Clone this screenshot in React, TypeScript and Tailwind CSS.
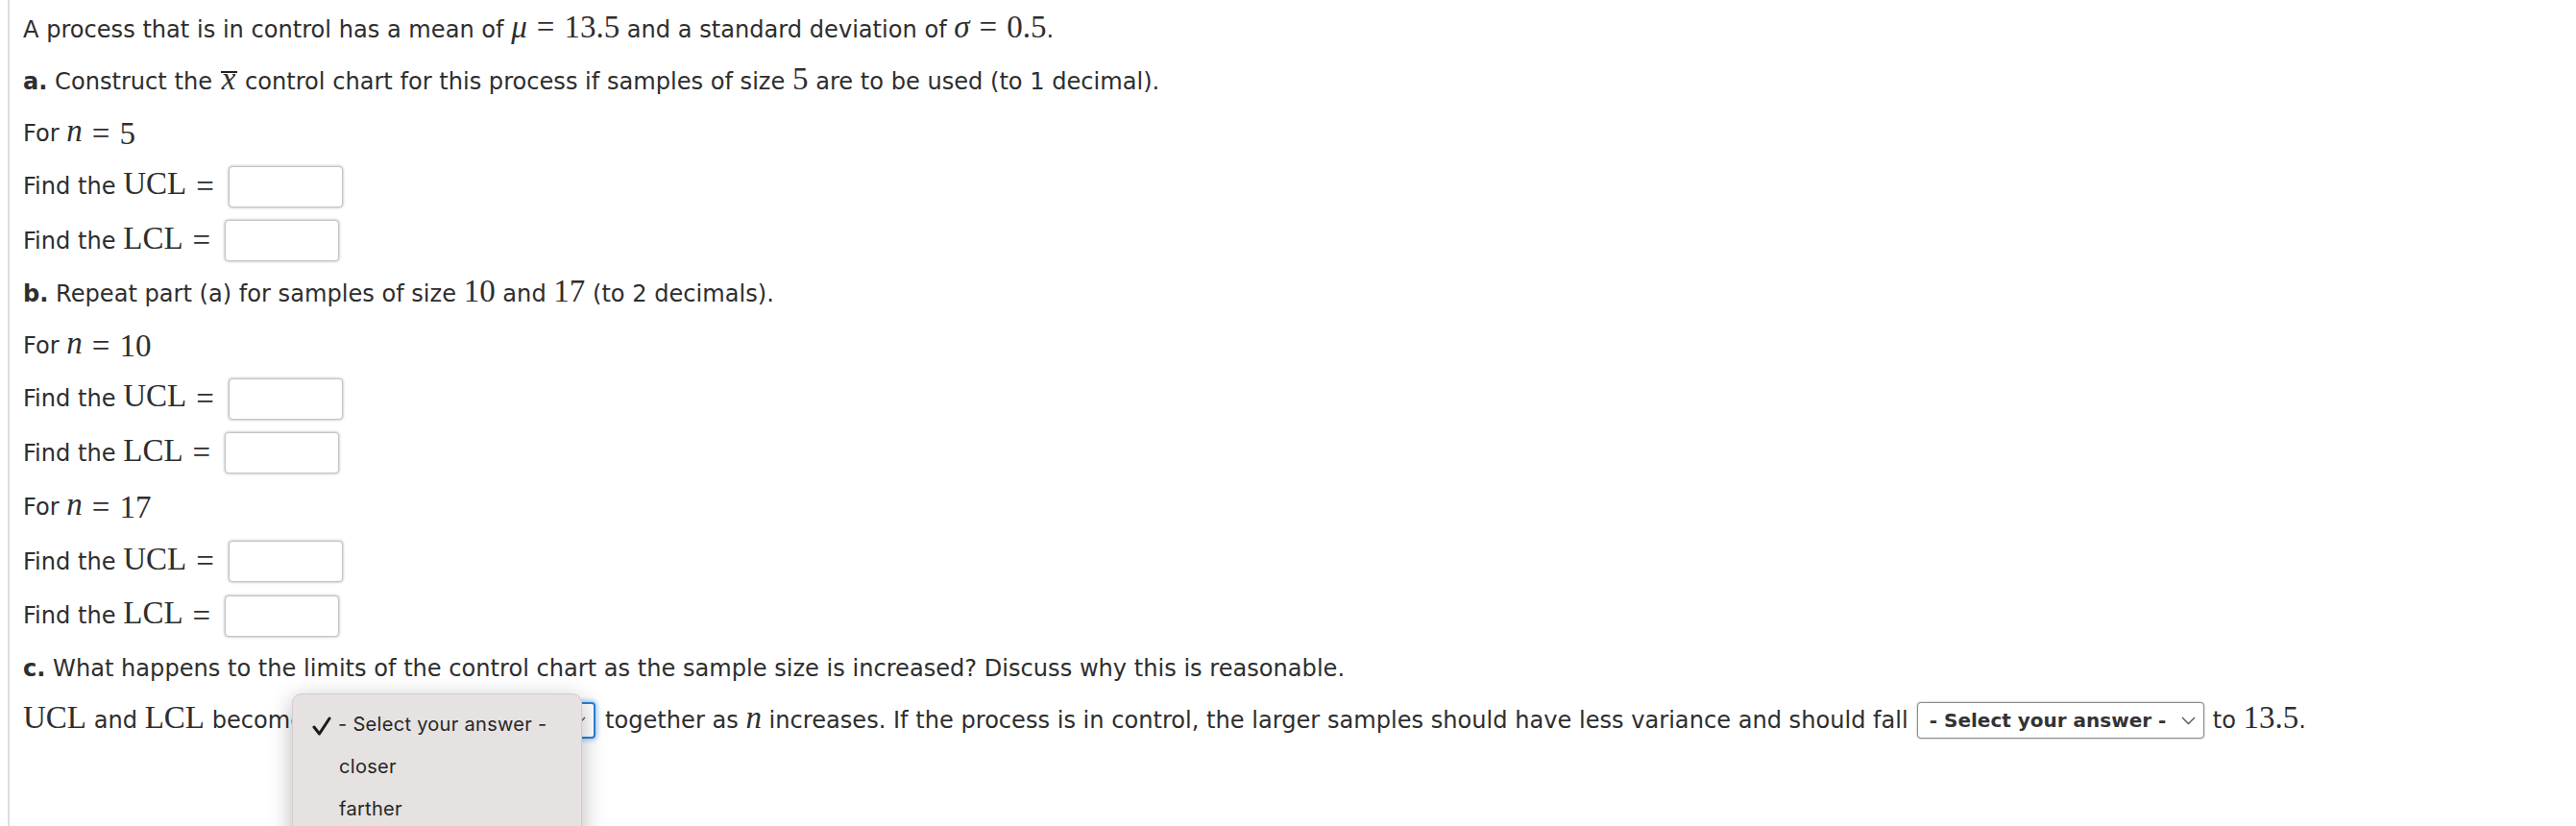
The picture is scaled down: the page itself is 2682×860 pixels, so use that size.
import React from "react";

const M = ({ children, i = false }: { children: React.ReactNode; i?: boolean }) => (
  <span className={`font-['Liberation_Serif',serif] text-[33px] leading-none ${i ? "italic" : ""}`}>{children}</span>
);

const Eq = () => <span className="font-['Liberation_Serif',serif] text-[33px] leading-none mx-[10px]">=</span>;

const Box = () => (
  <span className="inline-block ml-[5px] w-[119px] h-[43px] rounded-[4px] border border-[#c4c4c4] bg-white shadow-[0_0_3px_rgba(0,0,0,0.35)]" />
);

const Chevron = () => (
  <svg width="15" height="9" viewBox="0 0 15 9" className="shrink-0">
    <path d="M1 1 L7.5 7.5 L14 1" fill="none" stroke="#555" strokeWidth="1.4" />
  </svg>
);

const Check = () => (
  <svg width="20" height="20" viewBox="0 0 20 20" className="shrink-0">
    <path d="M2 11 L7.5 18 L18 2" fill="none" stroke="#1a1a1a" strokeWidth="3" strokeLinecap="round" strokeLinejoin="round" />
  </svg>
);

const XBar = () => (
  <span className="relative inline-block font-['Liberation_Serif',serif] italic text-[33px] leading-none px-[2px]">
    x
    <span className="absolute left-[1px] right-0 top-[8px] h-[1.5px] bg-[#222]" />
  </span>
);

export default function App() {
  return (
    <div className="w-[2682px] h-[860px] overflow-hidden bg-white pl-[8px]">
      <div className="h-full border-l-2 border-[#dedede] pl-[14px] pt-[3px] font-['DejaVu_Sans',sans-serif] text-[24.1px] text-[#2e2e2e] whitespace-nowrap">
        <div className="h-[55px] flex items-center">
          <span>
            A process that is in control has a mean of <M i>μ</M>
            <Eq />
            <M>13.5</M> and a standard deviation of <M i>σ</M>
            <Eq />
            <M>0.5</M>.
          </span>
        </div>
        <div className="h-[54px] flex items-center">
          <span>
            <b>a.</b> Construct the <XBar /> control chart for this process if samples of size <M>5</M> are to be used (to 1 decimal).
          </span>
        </div>
        <div className="h-[54px] flex items-center">
          <span>For <M i>n</M></span>
          <Eq />
          <M>5</M>
        </div>
        <div className="h-[56px] flex items-center">
          <span>Find the <M>UCL</M></span>
          <Eq />
          <Box />
        </div>
        <div className="h-[57px] flex items-center">
          <span>Find the <M>LCL</M></span>
          <Eq />
          <Box />
        </div>
        <div className="h-[54px] flex items-center">
          <span>
            <b>b.</b> Repeat part (a) for samples of size <M>10</M> and <M>17</M> (to 2 decimals).
          </span>
        </div>
        <div className="h-[54px] flex items-center">
          <span>For <M i>n</M></span>
          <Eq />
          <M>10</M>
        </div>
        <div className="h-[56px] flex items-center">
          <span>Find the <M>UCL</M></span>
          <Eq />
          <Box />
        </div>
        <div className="h-[57px] flex items-center">
          <span>Find the <M>LCL</M></span>
          <Eq />
          <Box />
        </div>
        <div className="h-[56px] flex items-center">
          <span>For <M i>n</M></span>
          <Eq />
          <M>17</M>
        </div>
        <div className="h-[57px] flex items-center">
          <span>Find the <M>UCL</M></span>
          <Eq />
          <Box />
        </div>
        <div className="h-[56px] flex items-center">
          <span>Find the <M>LCL</M></span>
          <Eq />
          <Box />
        </div>
        <div className="h-[54px] flex items-center">
          <span>
            <b>c.</b> What happens to the limits of the control chart as the sample size is increased? Discuss why this is reasonable.
          </span>
        </div>
        <div className="h-[54px] flex items-center">
          <span>
            <M>UCL</M> and <M>LCL</M> become
          </span>
          <div className="relative ml-[4px] w-[299px] h-[38px] rounded-[4px] border-2 border-[#2b7fd6] shadow-[0_0_4px_2px_rgba(60,150,240,0.45)] bg-white flex items-center justify-between pl-[12px] pr-[8px]">
            <span className="font-bold text-[20px] text-[#333]">- Select your answer -</span>
            <Chevron />
            <div className="absolute left-[-19px] top-[-11px] w-[302px] h-[160px] rounded-[10px] bg-[#e5e2e1] border border-[#d0cdcc] shadow-[0_6px_24px_rgba(0,0,0,0.28)] pt-[9px] font-['Inter',sans-serif] text-[20px] tracking-[0.3px] text-[#262626]">
              <div className="relative h-[44px] flex items-center pl-[47px]">
                <span className="absolute left-[20px] top-[14px]">
                  <Check />
                </span>
                - Select your answer -
              </div>
              <div className="h-[44px] flex items-center pl-[48px]">closer</div>
              <div className="h-[44px] flex items-center pl-[48px]">farther</div>
            </div>
          </div>
          <span className="ml-[10px]">
            together as <M i>n</M> increases. If the process is in control, the larger samples should have less variance and should fall
          </span>
          <div className="ml-[9px] w-[299px] h-[38px] rounded-[4px] border border-[#8c8c8c] shadow-[0_0_2px_rgba(0,0,0,0.4)] bg-white flex items-center justify-between pl-[12px] pr-[8px]">
            <span className="font-bold text-[20px] text-[#333]">- Select your answer -</span>
            <Chevron />
          </div>
          <span className="ml-[9px]">
            to <M>13.5</M>.
          </span>
        </div>
      </div>
    </div>
  );
}
